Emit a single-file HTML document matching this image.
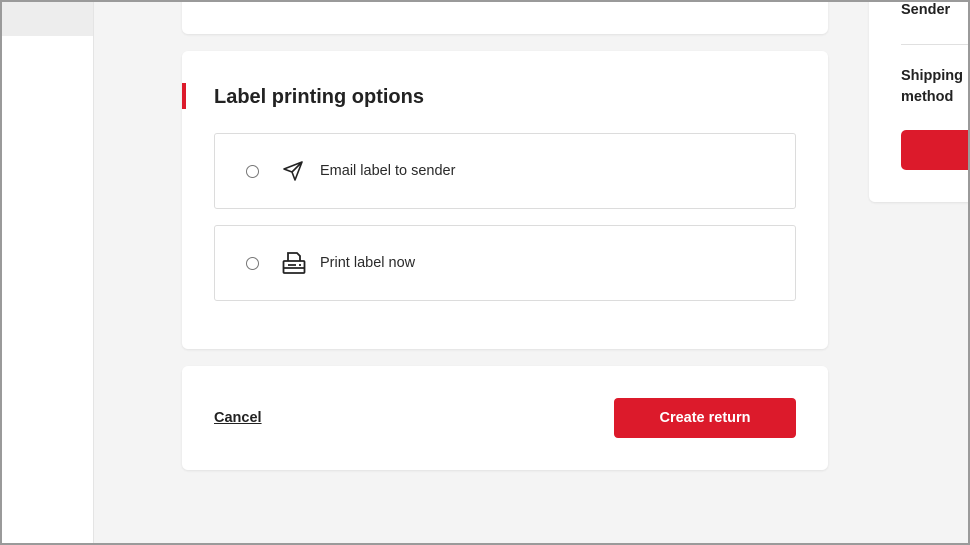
<!DOCTYPE html>
<html><head><style>
*{box-sizing:border-box;margin:0;padding:0}
body{width:970px;height:545px;overflow:hidden;background:#f4f4f4;font-family:"Liberation Sans",sans-serif;color:#222;position:relative}
.frame{position:absolute;inset:0;border:2px solid #9a9a9a;z-index:10;pointer-events:none}
.side{position:absolute;left:0;top:0;width:94px;height:545px;background:#fff;border-right:1px solid #e4e4e4}
.side .top{height:36px;background:#ededed}
.card{position:absolute;background:#fff;border-radius:6px;box-shadow:0 1px 2px rgba(0,0,0,.08)}
.opt{position:absolute;left:32px;width:582px;height:76px;border:1px solid #dcdcdc;border-radius:3px}
.radio{position:absolute;left:31px;top:31px;width:13px;height:13px;border:1px solid #777;border-radius:50%}
.opt svg{position:absolute;left:67px}
.opt span{position:absolute;left:105px;top:29px;font-size:14.5px;color:#2a2a2a}
</style></head><body>
<div class="side"><div class="top"></div></div>
<div class="card" style="left:182px;top:-10px;width:646px;height:44px"></div>
<div class="card" style="left:182px;top:51px;width:646px;height:298px">
  <div style="position:absolute;left:0;top:32px;width:4px;height:26px;background:#dc1a2b"></div>
  <div style="position:absolute;left:32px;top:35px;font-size:20px;font-weight:bold;color:#222">Label printing options</div>
  <div class="opt" style="top:82px"><div class="radio"></div>
    <svg style="top:26px" width="22" height="22" viewBox="0 0 22 22" fill="none" stroke="#222" stroke-width="1.6" stroke-linejoin="round"><path d="M2 9 L20 2 L13 20 L10 12 Z M10 12 L20 2"/></svg>
    <span>Email label to sender</span></div>
  <div class="opt" style="top:174px"><div class="radio"></div>
    <svg style="top:25px" width="24" height="24" viewBox="0 0 24 24" fill="none" stroke="#222" stroke-width="1.8"><path d="M6 10 V2 H15 L18 5 V10"/><rect x="1.5" y="10" width="21" height="12" rx="1"/><path d="M1.5 17 H22.5 M6 14 H14 M17 14 H19"/></svg>
    <span>Print label now</span></div>
</div>
<div class="card" style="left:182px;top:366px;width:646px;height:104px">
  <div style="position:absolute;left:32px;top:44px;font-size:14.5px;font-weight:bold;text-decoration:underline;color:#222">Cancel</div>
  <div style="position:absolute;left:432px;top:32px;width:182px;height:40px;background:#dc1a2b;border-radius:4px;color:#fff;font-size:14.5px;font-weight:bold;text-align:center;line-height:40px">Create return</div>
</div>
<div class="card" style="left:869px;top:-10px;width:120px;height:212px">
  <div style="position:absolute;left:32px;top:12px;font-size:14.5px;font-weight:bold;color:#222">Sender</div>
  <div style="position:absolute;left:32px;top:54px;width:100px;border-top:1px solid #e0e0e0"></div>
  <div style="position:absolute;left:32px;top:76px;font-size:14.5px;font-weight:bold;color:#222;line-height:21px">Shipping<br>method</div>
  <div style="position:absolute;left:32px;top:140px;width:100px;height:40px;background:#dc1a2b;border-radius:5px"></div>
</div>
<div class="frame"></div>
</body></html>
